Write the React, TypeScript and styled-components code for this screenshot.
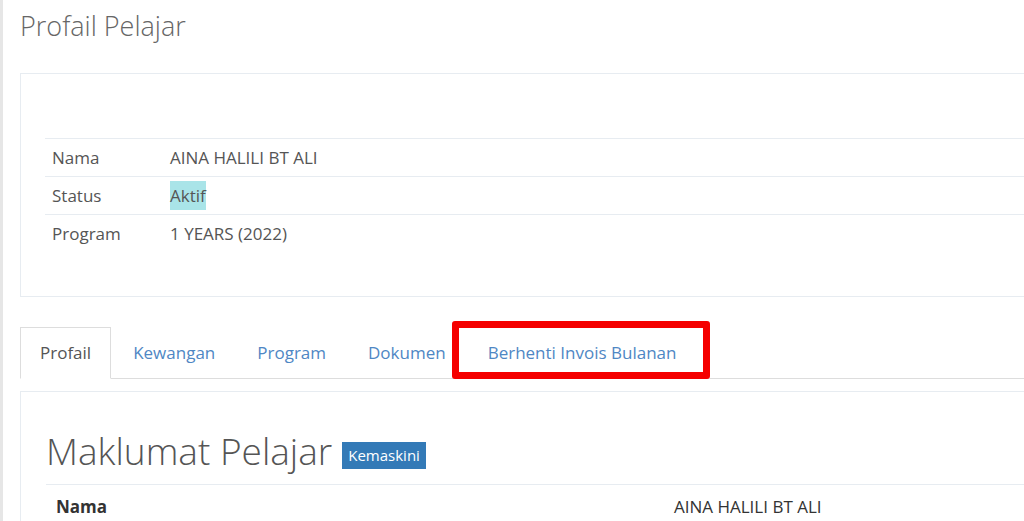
import React from "react";
import styled, { createGlobalStyle } from "styled-components";

const GlobalStyle = createGlobalStyle`
	html, body {
		margin: 0;
		padding: 0;
		background: #fff;
		overflow: hidden;
	}
	body {
		font-family: "Open Sans", "Noto Sans", sans-serif;
		color: #555;
	}
	* {
		box-sizing: border-box;
	}
`;

const infoRows = [
	{ label: "Nama", value: "AINA HALILI BT ALI" },
	{ label: "Status", value: "Aktif", highlight: true },
	{ label: "Program", value: "1 YEARS (2022)" },
];

const tabs = ["Profail", "Kewangan", "Program", "Dokumen", "Berhenti Invois Bulanan"];

const App = () => {
	return (
		<>
			<GlobalStyle />
			<Page>
				<PageTitle>Profail Pelajar</PageTitle>

				<Panel>
					<InfoTable>
						<tbody>
							{infoRows.map((row) => (
								<InfoRow key={row.label}>
									<LabelCell>{row.label}</LabelCell>
									<ValueCell>
										{row.highlight ? <Highlight>{row.value}</Highlight> : row.value}
									</ValueCell>
								</InfoRow>
							))}
						</tbody>
					</InfoTable>
				</Panel>

				<TabBar>
					{tabs.map((tab, i) => (
						<TabItem key={tab} $active={i === 0}>
							<TabLink $active={i === 0}>{tab}</TabLink>
							{/* red highlight box drawn over the last tab */}
							{i === tabs.length - 1 && <Annotation />}
						</TabItem>
					))}
				</TabBar>

				<ContentPanel>
					<Heading>
						Maklumat Pelajar <EditLabel>Kemaskini</EditLabel>
					</Heading>
					<DetailTable>
						<tbody>
							<tr>
								<DetailLabel>Nama</DetailLabel>
								<DetailValue>AINA HALILI BT ALI</DetailValue>
							</tr>
						</tbody>
					</DetailTable>
				</ContentPanel>
			</Page>
		</>
	);
};

export default App;

// Styled Components
const Page = styled.div`
	width: 1300px;
	min-height: 521px;
	border-left: 3px solid #e6e6e6;
	padding: 0 0 0 17px;
`;

const PageTitle = styled.h3`
	margin: 0;
	padding-top: 7px;
	font-size: 27px;
	font-weight: 300;
	line-height: 38px;
	color: #666;
`;

const Panel = styled.div`
	margin-top: 28px;
	border: 1px solid #e7ecf1;
	padding: 64px 0 43px 24px;
`;

const InfoTable = styled.table`
	width: 100%;
	border-collapse: collapse;
	font-size: 17px;
`;

const InfoRow = styled.tr`
	border-top: 1px solid #e7ecf1;
`;

const LabelCell = styled.td`
	width: 118px;
	height: 38px;
	padding: 0 7px;
	color: #555;
`;

const ValueCell = styled.td`
	padding: 0 7px;
	color: #555;
`;

const Highlight = styled.span`
	background: #a9e4e8;
	padding: 3px 0;
`;

const TabBar = styled.ul`
	display: flex;
	list-style: none;
	margin: 30px 0 0;
	padding: 0;
	border-bottom: 1px solid #ddd;
	font-size: 17px;
`;

const TabItem = styled.li<{ $active?: boolean }>`
	position: relative;
	margin-bottom: -1px;
	margin-right: 2px;
	border: 1px solid ${(p) => (p.$active ? "#ddd" : "transparent")};
	border-bottom-color: ${(p) => (p.$active ? "#fff" : "transparent")};
	background: ${(p) => (p.$active ? "#fff" : "transparent")};
`;

const TabLink = styled.a<{ $active?: boolean }>`
	display: block;
	padding: 0 19px;
	line-height: 50px;
	color: ${(p) => (p.$active ? "#555" : "#4f87c4")};
	text-decoration: none;
	cursor: pointer;
`;

const Annotation = styled.span`
	position: absolute;
	left: -17px;
	top: -7px;
	right: -15px;
	bottom: -1px;
	border: 7px solid #f50000;
	border-radius: 3px;
	pointer-events: none;
`;

const ContentPanel = styled.div`
	margin-top: 12px;
	border: 1px solid #e7ecf1;
	padding: 34px 0 0 25px;
	min-height: 200px;
`;

const Heading = styled.h1`
	display: flex;
	align-items: flex-end;
	gap: 10px;
	margin: 0;
	padding-bottom: 8px;
	border-bottom: 1px solid #e7ecf1;
	font-size: 37px;
	font-weight: 300;
	line-height: 50px;
	color: #555;
`;

const EditLabel = styled.span`
	display: inline-block;
	margin-bottom: 7px;
	padding: 0 6px;
	height: 27px;
	line-height: 27px;
	background: #337ab7;
	color: #fff;
	font-size: 15px;
	font-weight: 400;
`;

const DetailTable = styled.table`
	width: 100%;
	border-collapse: collapse;
	font-size: 17px;
`;

const DetailLabel = styled.td`
	width: 628px;
	padding: 10px 10px;
	font-weight: 700;
	color: #333;
`;

const DetailValue = styled.td`
	padding: 10px 0;
	color: #333;
`;
